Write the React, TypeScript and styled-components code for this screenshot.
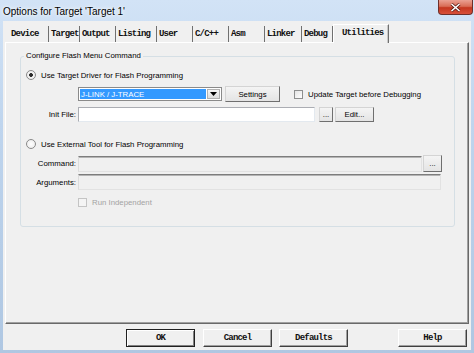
import * as React from "react";
import styled, { createGlobalStyle } from "styled-components";

const uiFont = `"Liberation Sans", Arial, sans-serif`;
const sysFont = `"Liberation Mono", "Courier New", monospace`;

const GlobalStyle = createGlobalStyle`
  html, body {
    margin: 0;
    padding: 0;
  }
  body {
    width: 474px;
    height: 353px;
    overflow: hidden;
    background: #c4d7ec;
  }
`;

const SWindow = styled.div`
  width: 474px;
  height: 353px;
  box-sizing: border-box;
  display: flex;
  flex-direction: column;
  padding: 0 3px 3px 3px;
  background: linear-gradient(180deg, #d2e3f6 0%, #bfd5ee 35%, #afc7e2 100%);
`;

const STitleBar = styled.div`
  height: 21px;
  flex-shrink: 0;
  display: flex;
  align-items: flex-start;
  justify-content: space-between;
`;

const STitle = styled.div`
  padding-top: 6px;
  font: 10px ${uiFont};
  line-height: 11px;
  color: #000;
  text-shadow: 0 0 3px #fff, 0 0 6px #fff;
`;

const SClose = styled.div`
  width: 35px;
  height: 15px;
  margin-right: -2px;
  box-sizing: border-box;
  border: 1px solid #6e2f2a;
  border-top: none;
  border-radius: 0 0 4px 4px;
  background: linear-gradient(180deg, #eaa092 0%, #d96d57 45%, #c4361f 55%, #d8503a 100%);
  display: flex;
  align-items: center;
  justify-content: center;
`;

const SClient = styled.div`
  flex: 1;
  display: flex;
  flex-direction: column;
  background: #f0f0f0;
`;

const STabStrip = styled.div`
  height: 18px;
  margin-top: 3px;
  padding-left: 6px;
  display: flex;
  align-items: flex-end;
`;

const STab = styled.div<{ $width: number; $active?: boolean }>`
  width: ${(p) => p.$width}px;
  height: ${(p) => (p.$active ? 19 : 16)}px;
  box-sizing: border-box;
  display: flex;
  align-items: center;
  padding-left: ${(p) => (p.$active ? 8 : 2)}px;
  padding-bottom: ${(p) => (p.$active ? 2 : 0)}px;
  font: bold 9px ${sysFont};
  letter-spacing: -0.8px;
  color: #111;
  white-space: nowrap;
  border-right: 1px solid #707070;
  ${(p) =>
    p.$active &&
    `
    position: relative;
    z-index: 1;
    margin-bottom: -1px;
    background: #f0f0f0;
    border-top: 1px solid #ffffff;
    border-left: 1px solid #ffffff;
    box-shadow: inset -1px 0 0 #c8c8c8;
  `}
`;

const SPanel = styled.div`
  height: 282px;
  margin: 0 2px;
  box-sizing: border-box;
  border: 1px solid;
  border-color: #ffffff #696969 #696969 #ffffff;
  box-shadow: inset -1px -1px 0 #a0a0a0;
  padding: 8px 13px 0 14px;
`;

const SGroup = styled.fieldset`
  margin: 0;
  height: 176px;
  box-sizing: border-box;
  padding: 0;
  border: 1px solid #d5dfe5;
  border-radius: 3px;
  display: flex;
  flex-direction: column;
`;

const SLegend = styled.legend`
  margin-left: 3px;
  padding: 0 2px;
  font: 7.8px ${uiFont};
  line-height: 10px;
  color: #000;
`;

const SRow = styled.div<{ $top: number; $height: number }>`
  margin-top: ${(p) => p.$top}px;
  height: ${(p) => p.$height}px;
  display: flex;
  align-items: center;
`;

const SText = styled.span<{ $disabled?: boolean }>`
  font: 7.8px ${uiFont};
  color: ${(p) => (p.$disabled ? "#a3a3a3" : "#000")};
  white-space: nowrap;
`;

const SLabel = styled.span`
  width: 55px;
  margin-right: 2px;
  text-align: right;
  font: 7.8px ${uiFont};
  color: #000;
  white-space: nowrap;
`;

const SIndent = styled.span<{ $width: number }>`
  width: ${(p) => p.$width}px;
  flex-shrink: 0;
`;

const SRadio = styled.span<{ $checked?: boolean }>`
  width: 10px;
  height: 10px;
  margin: 0 5px 0 5px;
  box-sizing: border-box;
  border: 1px solid #8a8a8a;
  border-radius: 50%;
  background: radial-gradient(circle at 50% 50%, ${(p) => (p.$checked ? "#222 0, #333 1.6px, #f4f4f4 2.2px" : "#ffffff 0")}, #e8e8e8 100%);
`;

const SCheck = styled.span<{ $disabled?: boolean; $size: number }>`
  width: ${(p) => p.$size}px;
  height: ${(p) => p.$size}px;
  box-sizing: border-box;
  border: 1px solid ${(p) => (p.$disabled ? "#c4c4c4" : "#8e8f8f")};
  background: ${(p) => (p.$disabled ? "#f4f4f4" : "linear-gradient(135deg, #e4e4e4, #ffffff)")};
  margin-right: 5px;
`;

const SCombo = styled.div`
  width: 144px;
  height: 14px;
  box-sizing: border-box;
  border: 1px solid #8a8a8a;
  background: #ffffff;
  display: flex;
  padding: 1px;
  gap: 1px;
`;

const SComboValue = styled.div`
  flex: 1;
  display: flex;
  align-items: center;
  padding-left: 1px;
  background: #3399ff;
  color: #ffffff;
  font: 7.8px ${uiFont};
`;

const SComboArrow = styled.div`
  width: 13px;
  box-sizing: border-box;
  border: 1px solid #b0b0b0;
  background: linear-gradient(180deg, #f6f6f6, #dcdcdc);
  display: flex;
  align-items: center;
  justify-content: center;
`;

const SButton = styled.div<{ $width: number; $height: number; $gap?: number }>`
  width: ${(p) => p.$width}px;
  height: ${(p) => p.$height}px;
  margin-left: ${(p) => p.$gap ?? 0}px;
  box-sizing: border-box;
  border: 1px solid;
  border-color: #d4d4d4 #6f6f6f #6f6f6f #d4d4d4;
  background: linear-gradient(180deg, #f4f4f4, #e4e4e4);
  display: flex;
  align-items: center;
  justify-content: center;
  font: 7.8px ${uiFont};
  color: #000;
`;

const SField = styled.div<{ $width: number; $height: number; $disabled?: boolean }>`
  width: ${(p) => p.$width}px;
  height: ${(p) => p.$height}px;
  box-sizing: border-box;
  border: 1px solid;
  border-color: ${(p) => (p.$disabled ? "#7d7d7d #e2e2e2 #e2e2e2 #dcdcdc" : "#abadb3 #e3e9ef #e3e9ef #abadb3")};
  box-shadow: ${(p) => (p.$disabled ? "inset 0 1px 0 #b4b4b4" : "none")};
  background: ${(p) => (p.$disabled ? "#f0f0f0" : "#ffffff")};
`;

const SFooter = styled.div`
  height: 18px;
  margin-top: 5px;
  padding: 0 4px 0 123px;
  display: flex;
`;

const SDialogButton = styled.div<{ $default?: boolean; $push?: boolean; $gap?: number }>`
  width: 69px;
  height: 18px;
  box-sizing: border-box;
  margin-left: ${(p) => (p.$push ? "auto" : `${p.$gap ?? 0}px`)};
  border: 1px solid;
  border-color: ${(p) => (p.$default ? "#202020" : "#ffffff #404040 #404040 #ffffff")};
  box-shadow: ${(p) => (p.$default ? "inset 1px 1px 0 #ffffff, inset -1px -1px 0 #808080" : "inset -1px -1px 0 #a0a0a0")};
  background: #f0f0f0;
  display: flex;
  align-items: center;
  justify-content: center;
  font: bold 9px ${sysFont};
  letter-spacing: -0.8px;
  color: #111;
`;

const tabs: { label: string; width: number }[] = [
  { label: "Device", width: 40 },
  { label: "Target", width: 31 },
  { label: "Output", width: 36 },
  { label: "Listing", width: 41 },
  { label: "User", width: 36 },
  { label: "C/C++", width: 36 },
  { label: "Asm", width: 36 },
  { label: "Linker", width: 37 },
  { label: "Debug", width: 31 },
  { label: "Utilities", width: 56 },
];

export default function App() {
  return (
    <SWindow>
      <GlobalStyle />
      <STitleBar>
        <STitle>Options for Target 'Target 1'</STitle>
        <SClose>
          <svg width="11" height="9" viewBox="0 0 11 9">
            <path d="M1.5 1 L9.5 8 M9.5 1 L1.5 8" stroke="#5a1d16" strokeWidth="3" />
            <path d="M1.5 1 L9.5 8 M9.5 1 L1.5 8" stroke="#ffffff" strokeWidth="1.6" />
          </svg>
        </SClose>
      </STitleBar>
      <SClient>
        <STabStrip>
          {tabs.map((t) => (
            <STab key={t.label} $width={t.width} $active={t.label === "Utilities"}>
              {t.label}
            </STab>
          ))}
        </STabStrip>
        <SPanel>
          <SGroup>
            <SLegend>Configure Flash Menu Command</SLegend>
            <SRow $top={8} $height={12}>
              <SRadio $checked />
              <SText>Use Target Driver for Flash Programming</SText>
            </SRow>
            <SRow $top={5} $height={16}>
              <SIndent $width={57} />
              <SCombo>
                <SComboValue>J-LINK / J-TRACE</SComboValue>
                <SComboArrow>
                  <svg width="7" height="4" viewBox="0 0 7 4">
                    <polygon points="0,0 7,0 3.5,4" fill="#000" />
                  </svg>
                </SComboArrow>
              </SCombo>
              <SButton $width={55} $height={16} $gap={3}>
                Settings
              </SButton>
              <SIndent $width={14} />
              <SCheck $size={9} />
              <SText>Update Target before Debugging</SText>
            </SRow>
            <SRow $top={5} $height={15}>
              <SLabel>Init File:</SLabel>
              <SField $width={237} $height={15} />
              <SButton $width={14} $height={15} $gap={4}>
                ...
              </SButton>
              <SButton $width={39} $height={15} $gap={2}>
                Edit...
              </SButton>
            </SRow>
            <SRow $top={16} $height={12}>
              <SRadio />
              <SText>Use External Tool for Flash Programming</SText>
            </SRow>
            <SRow $top={5} $height={17}>
              <SLabel>Command:</SLabel>
              <SField $width={344} $height={16} $disabled />
              <SButton $width={19} $height={17} $gap={1}>
                ...
              </SButton>
            </SRow>
            <SRow $top={2} $height={16}>
              <SLabel>Arguments:</SLabel>
              <SField $width={363} $height={16} $disabled />
            </SRow>
            <SRow $top={7} $height={11}>
              <SIndent $width={57} />
              <SCheck $size={9} $disabled />
              <SText $disabled>Run Independent</SText>
            </SRow>
          </SGroup>
        </SPanel>
        <SFooter>
          <SDialogButton $default>OK</SDialogButton>
          <SDialogButton $gap={8}>Cancel</SDialogButton>
          <SDialogButton $gap={7}>Defaults</SDialogButton>
          <SDialogButton $push>Help</SDialogButton>
        </SFooter>
      </SClient>
    </SWindow>
  );
}
